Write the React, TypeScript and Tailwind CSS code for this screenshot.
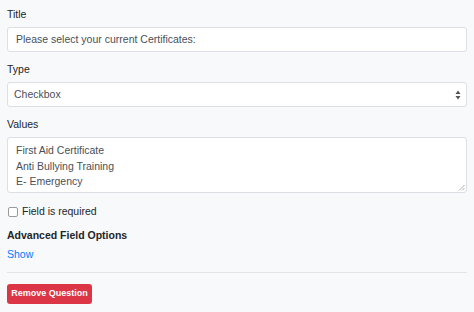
import React from "react";

export default function App() {
  const font = { fontFamily: '"Helvetica Neue", "Liberation Sans", Arial, sans-serif' };
  return (
    <div className="w-[474px] h-[312px] bg-[#f8f9fa] px-[7px] pt-[6px] text-[#212529] overflow-hidden" style={font}>
      <div className="h-[18px] flex items-center text-[10.5px]">Title</div>
      <div className="mt-[3px] h-[25px] bg-white border border-[#dcdfe3] rounded-[3px] flex items-center px-[8px] text-[10.5px] text-[#495057]">
        Please select your current Certificates:
      </div>
      <div className="mt-[9px] h-[18px] flex items-center text-[10.5px]">Type</div>
      <div className="mt-[3px] h-[25px] bg-white border border-[#dcdfe3] rounded-[3px] flex items-center justify-between pl-[6px] pr-[5px] text-[10.5px] text-[#495057]">
        <span>Checkbox</span>
        <svg width="6" height="10" viewBox="0 0 6 10">
          <path d="M3 0.5 L5.5 4 L0.5 4 Z" fill="#555" />
          <path d="M3 9.5 L5.5 6 L0.5 6 Z" fill="#555" />
        </svg>
      </div>
      <div className="mt-[9px] h-[18px] flex items-center text-[10.5px]">Values</div>
      <div className="mt-[3px] h-[56px] bg-white border border-[#dcdfe3] rounded-[3px] pl-[8px] pt-[5px] text-[10.5px] leading-[15.5px] text-[#495057] relative">
        <div>First Aid Certificate</div>
        <div>Anti Bullying Training</div>
        <div>E- Emergency</div>
        <svg className="absolute right-[1px] bottom-[1px]" width="7" height="7" viewBox="0 0 7 7">
          <path d="M6.5 1 L1 6.5 M6.5 4 L4 6.5" stroke="#999" strokeWidth="0.8" />
        </svg>
      </div>
      <div className="mt-[10px] h-[18px] flex items-center gap-[4px] text-[10.5px]">
        <span className="w-[10px] h-[10px] ml-[1px] bg-white border border-[#9a9a9a] rounded-[2px]" />
        <span>Field is required</span>
      </div>
      <div className="mt-[6px] h-[18px] flex items-center text-[10.5px] font-bold">Advanced Field Options</div>
      <div className="mt-[1px] h-[18px] flex items-center text-[10.5px] text-[#007bff]">Show</div>
      <div className="mt-[8px] border-t border-[#e3e5e8]" />
      <div className="mt-[11px]">
        <button className="h-[20px] w-[85px] bg-[#dc3545] text-white text-[9px] font-semibold rounded-[3px] flex items-center justify-center whitespace-nowrap">
          Remove Question
        </button>
      </div>
    </div>
  );
}
